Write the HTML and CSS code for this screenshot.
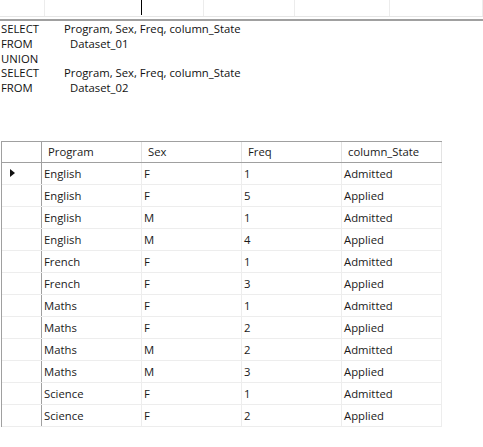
FILE: index.html
```html
<!DOCTYPE html>
<html>
<head>
<meta charset="utf-8">
<link rel="stylesheet" href="styles.css">
</head>
<body>
<div class="topstrip">
  <div class="tcell w44"></div>
  <div class="tcell w97 caret"></div>
  <div class="tcell w62"></div>
  <div class="tcell w91"></div>
  <div class="tcell w95"></div>
  <div class="tcell wrest"></div>
</div>
<div class="sql">
  <div class="ln"><span class="kw">SELECT</span><span class="ar">Program, Sex, Freq, column_State</span></div>
  <div class="ln"><span class="kw">FROM</span><span class="ar ind">Dataset_01</span></div>
  <div class="ln"><span class="kw">UNION</span></div>
  <div class="ln"><span class="kw">SELECT</span><span class="ar">Program, Sex, Freq, column_State</span></div>
  <div class="ln"><span class="kw">FROM</span><span class="ar ind">Dataset_02</span></div>
</div>
<div class="grid">
  <div class="row head">
    <div class="rh"></div>
    <div class="c">Program</div>
    <div class="c">Sex</div>
    <div class="c">Freq</div>
    <div class="c">column_State</div>
  </div>
  <div class="row"><div class="rh"><span class="tri"></span></div><div class="c">English</div><div class="c">F</div><div class="c">1</div><div class="c">Admitted</div></div>
  <div class="row"><div class="rh"></div><div class="c">English</div><div class="c">F</div><div class="c">5</div><div class="c">Applied</div></div>
  <div class="row"><div class="rh"></div><div class="c">English</div><div class="c">M</div><div class="c">1</div><div class="c">Admitted</div></div>
  <div class="row"><div class="rh"></div><div class="c">English</div><div class="c">M</div><div class="c">4</div><div class="c">Applied</div></div>
  <div class="row"><div class="rh"></div><div class="c">French</div><div class="c">F</div><div class="c">1</div><div class="c">Admitted</div></div>
  <div class="row"><div class="rh"></div><div class="c">French</div><div class="c">F</div><div class="c">3</div><div class="c">Applied</div></div>
  <div class="row"><div class="rh"></div><div class="c">Maths</div><div class="c">F</div><div class="c">1</div><div class="c">Admitted</div></div>
  <div class="row"><div class="rh"></div><div class="c">Maths</div><div class="c">F</div><div class="c">2</div><div class="c">Applied</div></div>
  <div class="row"><div class="rh"></div><div class="c">Maths</div><div class="c">M</div><div class="c">2</div><div class="c">Admitted</div></div>
  <div class="row"><div class="rh"></div><div class="c">Maths</div><div class="c">M</div><div class="c">3</div><div class="c">Applied</div></div>
  <div class="row"><div class="rh"></div><div class="c">Science</div><div class="c">F</div><div class="c">1</div><div class="c">Admitted</div></div>
  <div class="row"><div class="rh"></div><div class="c">Science</div><div class="c">F</div><div class="c">2</div><div class="c">Applied</div></div>
</div>
</body>
</html>
```
FILE: styles.css
```css
html, body {
  margin: 0;
  padding: 0;
  background: #ffffff;
}
body {
  width: 483px;
  height: 447px;
  overflow: hidden;
  font-family: "Open Sans", "Noto Sans", sans-serif;
  font-size: 11.3px;
  color: #1a1a1a;
}
.topstrip {
  display: flex;
  height: 16px;
  border-bottom: 1px solid #e6e6e6;
}
.tcell {
  height: 16px;
  border-right: 1px solid #ececec;
  box-sizing: border-box;
  position: relative;
}
.w44 { width: 45px; }
.w97 { width: 159px; }
.w62 { width: 91px; }
.w91 { width: 95px; }
.w95 { width: 93px; }
.wrest { flex: 1; border-right: none; }
.caret::after {
  content: "";
  position: absolute;
  left: 96px;
  top: 0;
  width: 1px;
  height: 15px;
  background: #000;
}
.sql {
  border-top: 2px solid #a0a0a0;
  margin-top: 2px;
  padding-top: 1px;
  padding-left: 1px;
  line-height: 14.75px;
  color: #111;
}
.ln {
  display: flex;
  height: 14.75px;
}
.kw { width: 63px; }
.ind { padding-left: 6px; }
.grid {
  margin-top: 45px;
  margin-left: 1px;
  width: 440px;
  border-left: 1px solid #a0a0a0;
  border-top: 1px solid #a0a0a0;
}
.row {
  display: flex;
  height: 22px;
  border-bottom: 1px solid #ededed;
  box-sizing: border-box;
}
.row.head {
  height: 21px;
  border-bottom: 1px solid #a0a0a0;
}
.rh {
  width: 39px;
  border-right: 1px solid #a0a0a0;
  position: relative;
  flex: none;
}
.c {
  width: 100px;
  box-sizing: border-box;
  border-right: 1px solid #ededed;
  padding-left: 2px;
  line-height: 21px;
  white-space: nowrap;
  flex: none;
}
.head .c {
  padding-left: 6px;
  line-height: 20px;
  border-right-color: #e3e3e3;
}
.tri {
  position: absolute;
  left: 8px;
  top: 6px;
  width: 0;
  height: 0;
  border-top: 4px solid transparent;
  border-bottom: 4px solid transparent;
  border-left: 5px solid #111;
}
```
